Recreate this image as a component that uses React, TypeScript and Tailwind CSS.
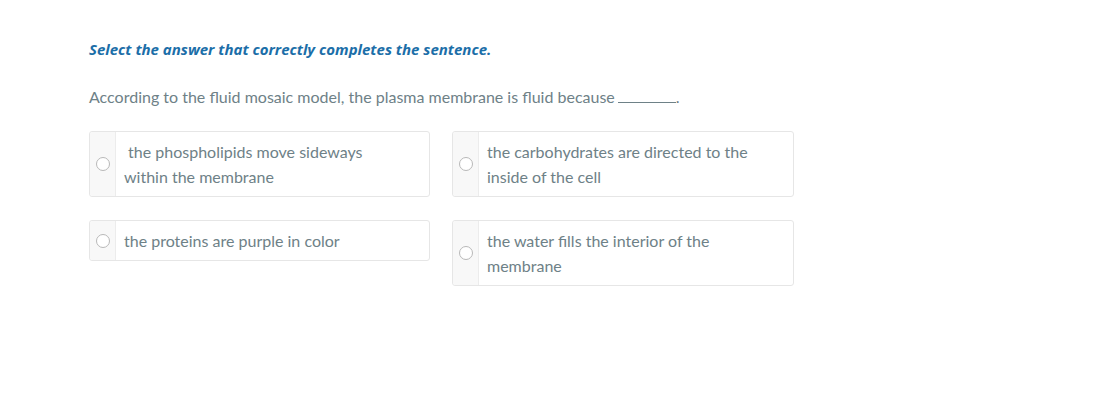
import React from 'react';

const choices = [
  { id: 'a', text: '\u00a0the phospholipids move sideways within the membrane' },
  { id: 'b', text: 'the carbohydrates are directed to the inside of the cell' },
  { id: 'c', text: 'the proteins are purple in color' },
  { id: 'd', text: 'the water fills the interior of the membrane' },
];

function Choice({ text }: { text: string }) {
  return (
    <label className="flex w-full self-start rounded-[3px] border border-[#e6e6e6] bg-white cursor-pointer">
      {/* radio column */}
      <div className="flex w-[26px] shrink-0 items-center justify-center rounded-l-[3px] border-r border-[#ececec] bg-[#f8f8f8]">
        <span className="block h-[14px] w-[14px] rounded-full border border-[#b8b8b8] bg-white" />
      </div>
      <div className="w-[285px] px-[8px] py-[7px] text-[16px] leading-[25px] text-[#6e8187]">{text}</div>
    </label>
  );
}

export default function App() {
  return (
    <div
      className="min-h-[405px] w-full bg-white pl-[89px] pt-[38px]"
      style={{ fontFamily: 'Lato, "Open Sans", sans-serif' }}
    >
      <h2
        className="text-[15px] font-bold italic leading-[22px] text-[#1b6ea8]"
        style={{ fontFamily: '"Open Sans", Lato, sans-serif' }}
      >
        Select the answer that correctly completes the sentence.
      </h2>

      <p className="mt-[27px] text-[16px] leading-[20px] text-[#6e8187]">
        According to the fluid mosaic model, the plasma membrane is fluid because
        <span className="ml-[3px] inline-block w-[58px] border-b border-[#6e8187] align-baseline" />.
      </p>

      <div className="mt-[24px] grid w-[705px] grid-cols-[341px_342px] gap-x-[22px] gap-y-[23px]">
        {choices.map((c) => (
          <Choice key={c.id} text={c.text} />
        ))}
      </div>
    </div>
  );
}
